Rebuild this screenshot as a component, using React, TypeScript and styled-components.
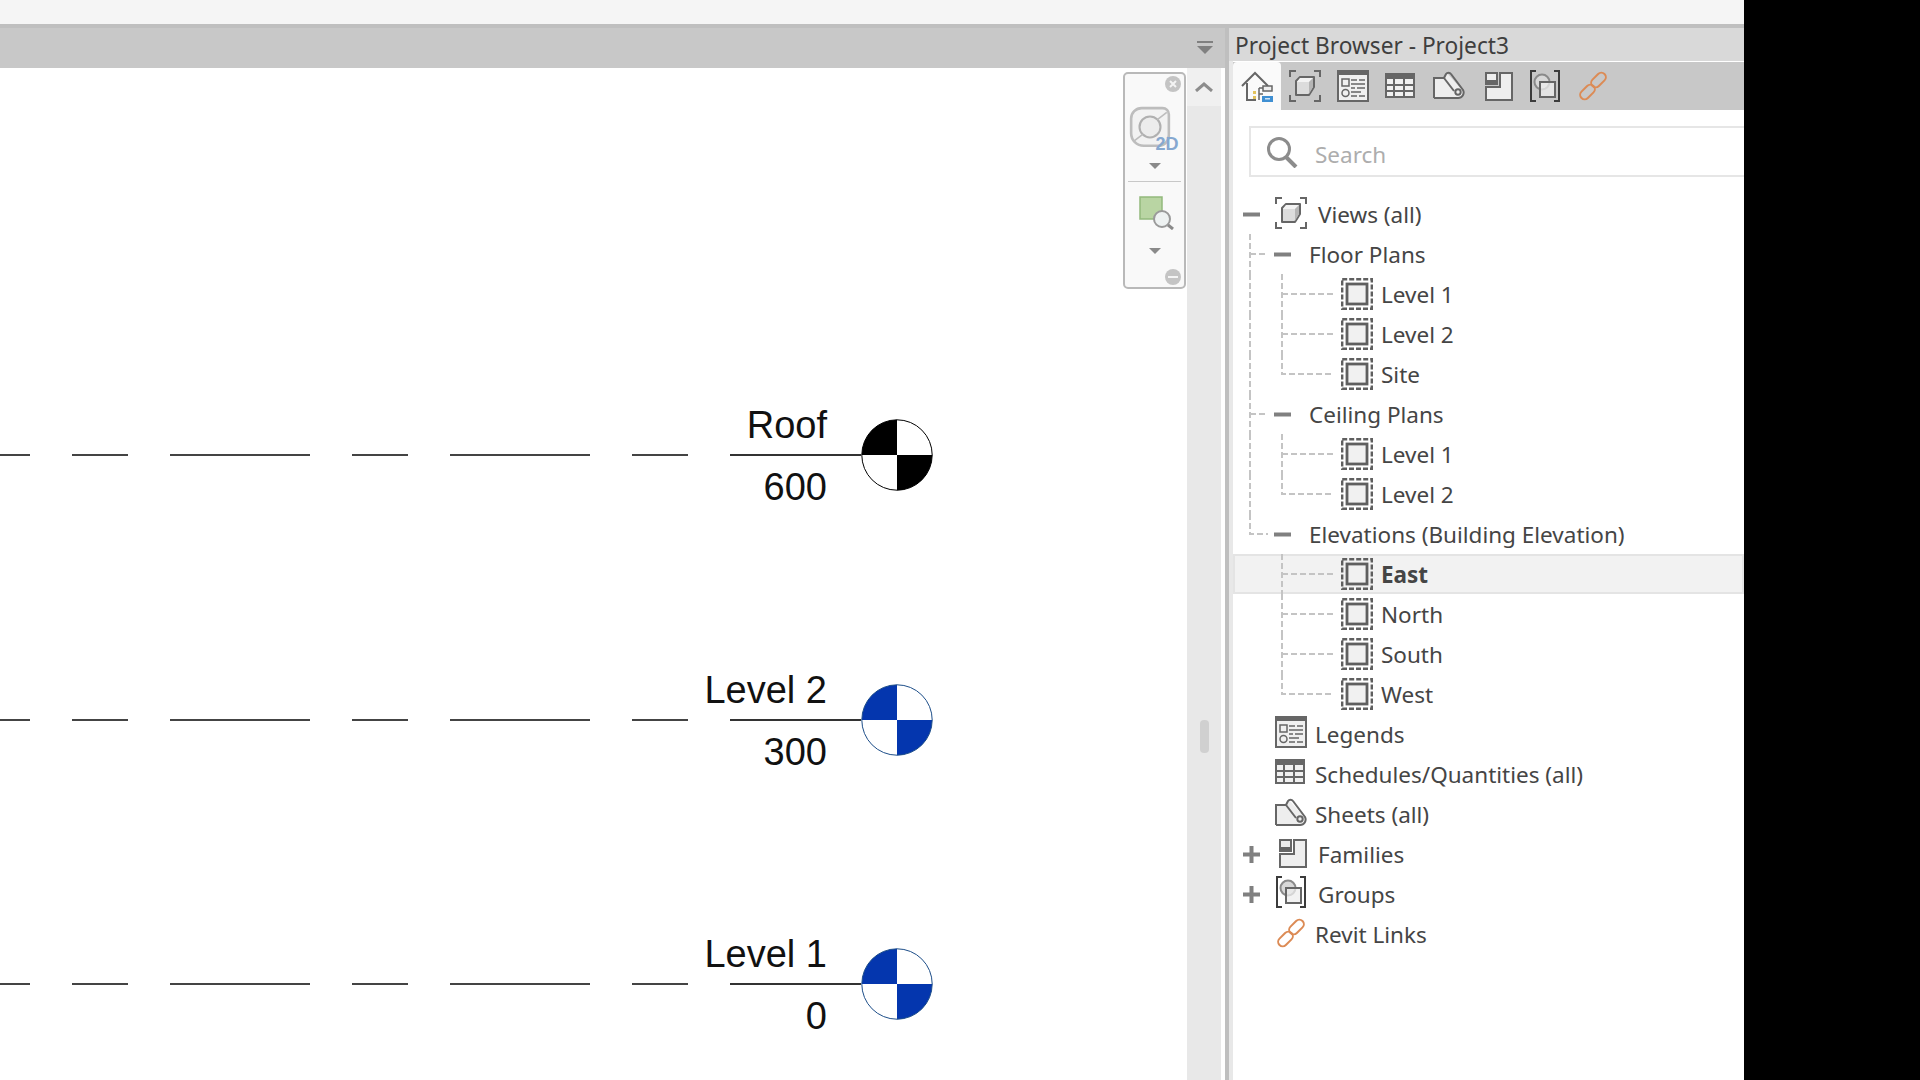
import * as React from 'react'
import styled, { createGlobalStyle } from 'styled-components'

const GlobalStyle = createGlobalStyle`
  html, body {
    margin: 0;
    width: 1920px;
    height: 1080px;
    overflow: hidden;
    background: #000;
  }
  * { box-sizing: border-box; }
`

const Shell = styled.div`
  width: 1744px;
  height: 1080px;
  overflow: hidden;
  display: flex;
  flex-direction: column;
  background: #fff;
  font-family: "Noto Sans", "Open Sans", sans-serif;
`

const TopStrip = styled.div`
  height: 24px;
  flex: none;
  background: #f5f5f5;
`

const Divider = styled.div`
  height: 4px;
  flex: none;
  background: #bfbfbf;
`

const Workspace = styled.div`
  flex: 1;
  min-height: 0;
  display: flex;
`

const ViewColumn = styled.div`
  width: 1225px;
  flex: none;
  display: flex;
  flex-direction: column;
`

const TabBar = styled.div`
  height: 40px;
  flex: none;
  background: #c8c8c8;
  display: flex;
  justify-content: flex-end;
  align-items: center;
  padding-right: 12px;
`

const ViewBody = styled.div`
  flex: 1;
  min-height: 0;
  display: flex;
  position: relative;
`

const Canvas = styled.div`
  width: 1187px;
  flex: none;
  padding-top: 307px;
  display: flex;
  flex-direction: column;
  gap: 104.5px;
`

const ScrollTrack = styled.div`
  width: 34px;
  flex: none;
  background: #e8e8e8;
  display: flex;
  flex-direction: column;
  align-items: center;
`

const ScrollUp = styled.div`
  align-self: stretch;
  height: 38px;
  background: #f0f0f0;
  display: flex;
  align-items: center;
  justify-content: center;
`

const ScrollThumb = styled.div`
  width: 9px;
  height: 33px;
  margin-top: 614px;
  border-radius: 4px;
  background: #d0d0d0;
`

const LevelRow = styled.div`
  height: 160px;
  display: flex;
  align-items: center;
`

const LevelDashes = styled.div`
  display: flex;
  gap: 42px;
  margin-right: 42px;
`

const Dash = styled.div<{ $width: number }>`
  width: ${(p) => p.$width}px;
  height: 2px;
  background: #444;
`

const LevelTag = styled.div`
  width: 131px;
  display: flex;
  flex-direction: column;
  align-items: flex-end;
  padding: 2px 34px 0 0;
  font: 38px/40px "Liberation Sans", Arial, sans-serif;
  color: #111;
  white-space: nowrap;
`

const LevelName = styled.div`
  margin-bottom: 9px;
`

const LevelRule = styled.div`
  width: 131px;
  margin-right: -34px;
  height: 2px;
  flex: none;
  background: #333;
`

const LevelHeight = styled.div`
  margin-top: 11px;
`

const NavBar = styled.div`
  position: absolute;
  left: 1123px;
  top: 4px;
  width: 63px;
  height: 217px;
  border: 2px solid #b9b9b9;
  border-radius: 5px;
  background: #f9f9f9;
  display: flex;
  flex-direction: column;
  align-items: center;
  padding-top: 2px;
`

const NavCorner = styled.div<{ $top?: number }>`
  align-self: flex-end;
  margin: ${(p) => p.$top ?? 0}px 3px 0 0;
  height: 16px;
  display: flex;
`

const Wheel = styled.div`
  position: relative;
  width: 52px;
  height: 46px;
  margin: 14px 0 10px;
`

const WheelBadge = styled.span`
  position: absolute;
  right: 2px;
  bottom: -1px;
  font: bold 18px/18px "Liberation Sans", Arial, sans-serif;
  color: #86a8d0;
`

const NavRule = styled.div`
  align-self: stretch;
  height: 1px;
  margin: 11px 3px 14px;
  background: #c8c8c8;
`

const NavArrow = styled.div<{ $top?: number }>`
  margin-top: ${(p) => p.$top ?? 0}px;
  height: 8px;
  display: flex;
`

const Browser = styled.div`
  flex: 1;
  min-width: 0;
  display: flex;
  flex-direction: column;
  border-left: 4px solid #bfbfbf;
`

const BrowserTitle = styled.div`
  height: 33px;
  flex: none;
  background: #d9d9d9;
  color: #3f3f3f;
  font-size: 22.7px;
  line-height: 35px;
  padding-left: 6px;
  white-space: nowrap;
`

const BrowserBody = styled.div`
  flex: 1;
  min-height: 0;
  border-left: 4px solid #e8e8e8;
  display: flex;
  flex-direction: column;
`

const IconTabs = styled.div`
  height: 48px;
  flex: none;
  margin-top: 1px;
  background: #c8c8c8;
  display: flex;
`

const IconTab = styled.div<{ $active?: boolean }>`
  width: 48px;
  flex: none;
  display: flex;
  align-items: center;
  justify-content: center;
  border-radius: 4px 4px 0 0;
  background: ${(p) => (p.$active ? '#fafafa' : 'transparent')};
`

const SearchBox = styled.div`
  height: 51px;
  flex: none;
  margin: 16px 0 0 16px;
  border: 2px solid #e6e6e6;
  border-right: 0;
  display: flex;
  align-items: center;
  padding-left: 15px;
  gap: 17px;
  color: #adadad;
  font-size: 22.5px;
`

const SearchLabel = styled.span`
  padding-top: 5px;
`

const Tree = styled.div`
  padding-top: 17px;
  display: flex;
  flex-direction: column;
`

const Row = styled.div<{ $indent: number; $selected?: boolean }>`
  position: relative;
  height: 40px;
  flex: none;
  display: flex;
  align-items: center;
  padding-left: ${(p) => p.$indent}px;
  color: #454545;
  font-size: 22.5px;
  font-weight: ${(p) => (p.$selected ? 700 : 400)};
  white-space: nowrap;
  background: ${(p) => (p.$selected ? '#f2f2f2' : 'transparent')};
  box-shadow: ${(p) => (p.$selected ? 'inset 0 0 0 2px #e4e4e4' : 'none')};
`

const Guides = styled.svg`
  position: absolute;
  left: 0;
  top: 0;
`

const ToggleSlot = styled.div<{ $gap: number }>`
  width: 17px;
  flex: none;
  margin-right: ${(p) => p.$gap}px;
  display: flex;
  align-items: center;
  justify-content: center;
`

const IconSlot = styled.div<{ $gap: number; $lift?: number }>`
  width: 32px;
  height: 32px;
  flex: none;
  margin-right: ${(p) => p.$gap}px;
  margin-bottom: ${(p) => (p.$lift ?? 0) * 2}px;
  display: flex;
`

const Gray = '#666'

type IconName =
  | 'home'
  | 'views'
  | 'legend'
  | 'schedule'
  | 'sheet'
  | 'families'
  | 'groups'
  | 'link'
  | 'plan'

const glyphs: Record<IconName, React.ReactNode> = {
  home: (
    <>
      <path d="M1 16L14 3L27 16" fill="none" stroke={Gray} strokeWidth="2" />
      <path d="M6 13V30H15" fill="none" stroke={Gray} strokeWidth="2" />
      <rect x="12" y="21" width="3" height="3" fill="#e3c35c" />
      <rect x="12" y="26" width="3" height="3" fill="#e3c35c" />
      <rect x="22" y="16" width="9" height="5" fill="#eee" stroke={Gray} strokeWidth="1.5" />
      <path d="M18 18V30M18 18H22M18 24H22" fill="none" stroke={Gray} strokeWidth="1.5" />
      <rect x="21" y="26" width="11" height="6" fill="#3f8fd2" />
      <rect x="24" y="28" width="5" height="1.5" fill="#cfe4f5" />
    </>
  ),
  views: (
    <>
      <path
        d="M1 7V1H7M25 1H31V7M31 25V31H25M7 31H1V25"
        fill="none"
        stroke={Gray}
        strokeWidth="2"
      />
      <path d="M11 7H25V17L20 25H7V11Z" fill="#dcdcdc" stroke={Gray} strokeWidth="2" strokeLinejoin="round" />
      <path d="M11 8H24L20 12H8Z" fill="#f3f3f3" />
      <path d="M20 12V24L24 17V8Z" fill="#b5b5b5" />
    </>
  ),
  legend: (
    <>
      <rect x="1" y="1" width="30" height="30" fill="#f0f0f0" stroke={Gray} strokeWidth="2" />
      <rect x="0" y="0" width="32" height="5" fill={Gray} />
      <rect x="5" y="9" width="7" height="7" fill="none" stroke={Gray} strokeWidth="1.5" />
      <circle cx="8.5" cy="23" r="3.5" fill="none" stroke={Gray} strokeWidth="1.5" />
      <path
        d="M14 10H20M22 10H28M14 14H28M14 18H18M20 18H28M14 22H24M14 26H20M22 26H28"
        fill="none"
        stroke={Gray}
        strokeWidth="1.7"
      />
    </>
  ),
  schedule: (
    <>
      <rect x="1" y="4" width="28" height="23" fill="#f0f0f0" stroke={Gray} strokeWidth="2" />
      <rect x="0" y="3" width="30" height="6" fill={Gray} />
      <path d="M9 9V27M19 9V27M1 15H29M1 21H29" fill="none" stroke={Gray} strokeWidth="2" />
    </>
  ),
  sheet: (
    <>
      <path d="M1 28V8H11L14 3L30 21V23A5 5 0 0 1 25 28Z" fill="#eee" />
      <path d="M1 28V8H11" fill="none" stroke={Gray} strokeWidth="2" />
      <path d="M1 28H25A5.5 5.5 0 0 0 30 20L18 4A3 3 0 0 0 13 4L11 8L21 21" fill="none" stroke={Gray} strokeWidth="2" />
      <circle cx="25" cy="22" r="2.7" fill="none" stroke={Gray} strokeWidth="2" />
    </>
  ),
  families: (
    <>
      <path d="M5 17H19V3H31V30H5Z" fill="#eee" stroke={Gray} strokeWidth="2" />
      <rect x="5" y="3" width="11" height="11" fill="#eee" stroke={Gray} strokeWidth="2" />
      <rect x="5" y="10" width="11" height="4" fill={Gray} />
    </>
  ),
  groups: (
    <>
      <path d="M7 1H2V31H7M25 1H30V31H25" fill="none" stroke="#3c3c3c" strokeWidth="2" />
      <circle cx="13" cy="12" r="7.5" fill="#d8d8d8" stroke="#8a8a8a" strokeWidth="2" />
      <rect x="11" y="12" width="15" height="15" fill="#eee" fillOpacity="0.75" stroke={Gray} strokeWidth="2" />
    </>
  ),
  link: (
    <>
      <rect x="2" y="17.5" width="17" height="9" rx="4.5" fill="none" stroke="#dc8b55" strokeWidth="2" transform="rotate(-45 10.5 22)" />
      <rect x="13" y="5.5" width="17" height="9" rx="4.5" fill="none" stroke="#dc8b55" strokeWidth="2" transform="rotate(-45 21.5 10)" />
    </>
  ),
  plan: (
    <>
      <rect x="1.2" y="1.2" width="29.6" height="29.6" fill="none" stroke="#5f5f5f" strokeWidth="2.4" strokeDasharray="5 2" />
      <rect x="6" y="6" width="20" height="20" fill="#f1f1f1" stroke="#5f5f5f" strokeWidth="2.8" />
    </>
  )
}

const Glyph = ({ name }: { name: IconName }) => (
  <svg width="32" height="32" viewBox="0 0 32 32">
    {glyphs[name]}
  </svg>
)

const Toggle = ({ open }: { open: boolean }) => (
  <svg width="17" height="17" viewBox="0 0 17 17">
    <path d={open ? 'M0 8.5H17' : 'M0 8.5H17M8.5 0V17'} stroke="#808080" strokeWidth="4" />
  </svg>
)

const GuideLines = ({ d }: { d: string }) => (
  <Guides width="120" height="40">
    <path d={d} fill="none" stroke="#c4c4c4" strokeWidth="2" strokeDasharray="6 3" />
  </Guides>
)

const OUTER_PASS = 'M17 0V40'
const OUTER_BRANCH = 'M17 0V40M17 20H35'
const OUTER_LAST = 'M17 0V20H35'
const INNER_BRANCH = 'M49 0V40M49 20H100'
const INNER_LAST = 'M49 0V20H100'

interface RootProps {
  icon: IconName
  label: string
  toggle?: boolean
  gap?: number
  lift?: number
}

const Root = ({ icon, label, toggle, gap = 8, lift }: RootProps) => (
  <Row $indent={10}>
    <ToggleSlot $gap={15}>{toggle === undefined ? null : <Toggle open={toggle} />}</ToggleSlot>
    <IconSlot $gap={gap} $lift={lift}>
      <Glyph name={icon} />
    </IconSlot>
    {label}
  </Row>
)

const Group = ({ label, last }: { label: string; last?: boolean }) => (
  <Row $indent={41}>
    <GuideLines d={last ? OUTER_LAST : OUTER_BRANCH} />
    <ToggleSlot $gap={18}>
      <Toggle open />
    </ToggleSlot>
    {label}
  </Row>
)

interface LeafProps {
  label: string
  last?: boolean
  outer?: boolean
  selected?: boolean
}

const Leaf = ({ label, last, outer, selected }: LeafProps) => (
  <Row $indent={108} $selected={selected}>
    <GuideLines d={(outer ? OUTER_PASS : '') + (last ? INNER_LAST : INNER_BRANCH)} />
    <IconSlot $gap={8}>
      <Glyph name="plan" />
    </IconSlot>
    {label}
  </Row>
)

interface LevelProps {
  name: string
  height: string
  color: string
  outline: string
}

const Level = ({ name, height, color, outline }: LevelProps) => (
  <LevelRow>
    <LevelDashes>
      {[30, 56, 140, 56, 140, 56].map((w, i) => (
        <Dash key={i} $width={w} />
      ))}
    </LevelDashes>
    <LevelTag>
      <LevelName>{name}</LevelName>
      <LevelRule />
      <LevelHeight>{height}</LevelHeight>
    </LevelTag>
    <svg width="72" height="72" viewBox="0 0 72 72">
      <path d="M36 36V0.8A35.2 35.2 0 0 0 0.8 36Z" fill={color} />
      <path d="M36 36H71.2A35.2 35.2 0 0 1 36 71.2Z" fill={color} />
      <circle cx="36" cy="36" r="35.2" fill="none" stroke={outline} strokeWidth="1" />
    </svg>
  </LevelRow>
)

const SmallArrow = ({ top }: { top?: number }) => (
  <NavArrow $top={top}>
    <svg width="12" height="8" viewBox="0 0 12 8">
      <path d="M0 1H12L6 7Z" fill="#8a8a8a" />
    </svg>
  </NavArrow>
)

const NavCircle = ({ d, top }: { d: string; top?: number }) => (
  <NavCorner $top={top}>
    <svg width="16" height="16" viewBox="0 0 16 16">
      <circle cx="8" cy="8" r="8" fill="#c4c4c4" />
      <path d={d} stroke="#f4f4f4" strokeWidth="2" fill="none" />
    </svg>
  </NavCorner>
)

export default function App() {
  return (
    <Shell>
      <GlobalStyle />
      <TopStrip />
      <Divider />
      <Workspace>
        <ViewColumn>
          <TabBar>
            <svg width="16" height="14" viewBox="0 0 16 14">
              <path d="M0 1H16" stroke="#808080" strokeWidth="2" />
              <path d="M0 5H16L8 13Z" fill="#808080" />
            </svg>
          </TabBar>
          <ViewBody>
            <Canvas>
              <Level name="Roof" height="600" color="#000" outline="#000" />
              <Level name="Level 2" height="300" color="#0436ae" outline="#1d4e89" />
              <Level name="Level 1" height="0" color="#0436ae" outline="#1d4e89" />
            </Canvas>
            <ScrollTrack>
              <ScrollUp>
                <svg width="18" height="10" viewBox="0 0 18 10">
                  <path d="M1 9L9 2L17 9" fill="none" stroke="#8c8c8c" strokeWidth="3" />
                </svg>
              </ScrollUp>
              <ScrollThumb />
            </ScrollTrack>
            <NavBar>
              <NavCircle d="M5 5L11 11M11 5L5 11" />
              <Wheel>
                <svg width="42" height="44" viewBox="0 0 40 42">
                  <path
                    d="M12 2H32A6 6 0 0 1 38 8V28A10 10 0 0 1 28 38H14A12 12 0 0 1 2 26V12A10 10 0 0 1 12 2Z"
                    fill="#f2f2f2"
                    stroke="#bdbdbd"
                    strokeWidth="2.5"
                  />
                  <circle cx="20" cy="20" r="10" fill="#ececec" stroke="#b0b0b0" strokeWidth="2" />
                  <path d="M4 34L13 27M36 6L27 13" stroke="#bdbdbd" strokeWidth="1.5" />
                </svg>
                <WheelBadge>2D</WheelBadge>
              </Wheel>
              <SmallArrow />
              <NavRule />
              <svg width="40" height="34" viewBox="0 0 40 34">
                <rect x="5" y="1" width="22" height="22" fill="#b9d5a3" stroke="#93b97c" strokeWidth="1.5" />
                <circle cx="27" cy="23" r="8" fill="#eef2f2" stroke="#9a9a9a" strokeWidth="2" />
                <path d="M33 29L38 33" stroke="#8a8a8a" strokeWidth="3" />
              </svg>
              <SmallArrow top={17} />
              <NavCircle d="M3 8H13" top={14} />
            </NavBar>
          </ViewBody>
        </ViewColumn>
        <Browser>
          <BrowserTitle>Project Browser - Project3</BrowserTitle>
          <BrowserBody>
            <IconTabs>
              <IconTab $active>
                <Glyph name="home" />
              </IconTab>
              {(['views', 'legend', 'schedule', 'sheet', 'families', 'groups', 'link'] as IconName[]).map((n) => (
                <IconTab key={n}>
                  <Glyph name={n} />
                </IconTab>
              ))}
            </IconTabs>
            <SearchBox>
              <svg width="32" height="32" viewBox="0 0 32 32">
                <circle cx="13" cy="13" r="10.5" fill="none" stroke="#8c8c8c" strokeWidth="3" />
                <path d="M20 21L30 31" stroke="#8c8c8c" strokeWidth="4" />
              </svg>
              <SearchLabel>Search</SearchLabel>
            </SearchBox>
            <Tree>
              <Root icon="views" label="Views (all)" toggle gap={11} lift={1} />
              <Group label="Floor Plans" />
              <Leaf label="Level 1" outer />
              <Leaf label="Level 2" outer />
              <Leaf label="Site" outer last />
              <Group label="Ceiling Plans" />
              <Leaf label="Level 1" outer />
              <Leaf label="Level 2" outer last />
              <Group label="Elevations (Building Elevation)" last />
              <Leaf label="East" selected />
              <Leaf label="North" />
              <Leaf label="South" />
              <Leaf label="West" last />
              <Root icon="legend" label="Legends" lift={2} />
              <Root icon="schedule" label="Schedules/Quantities (all)" lift={2} />
              <Root icon="sheet" label="Sheets (all)" lift={1} />
              <Root icon="families" label="Families" toggle={false} gap={11} lift={1} />
              <Root icon="groups" label="Groups" toggle={false} gap={11} lift={2} />
              <Root icon="link" label="Revit Links" lift={1} />
            </Tree>
          </BrowserBody>
        </Browser>
      </Workspace>
    </Shell>
  )
}
